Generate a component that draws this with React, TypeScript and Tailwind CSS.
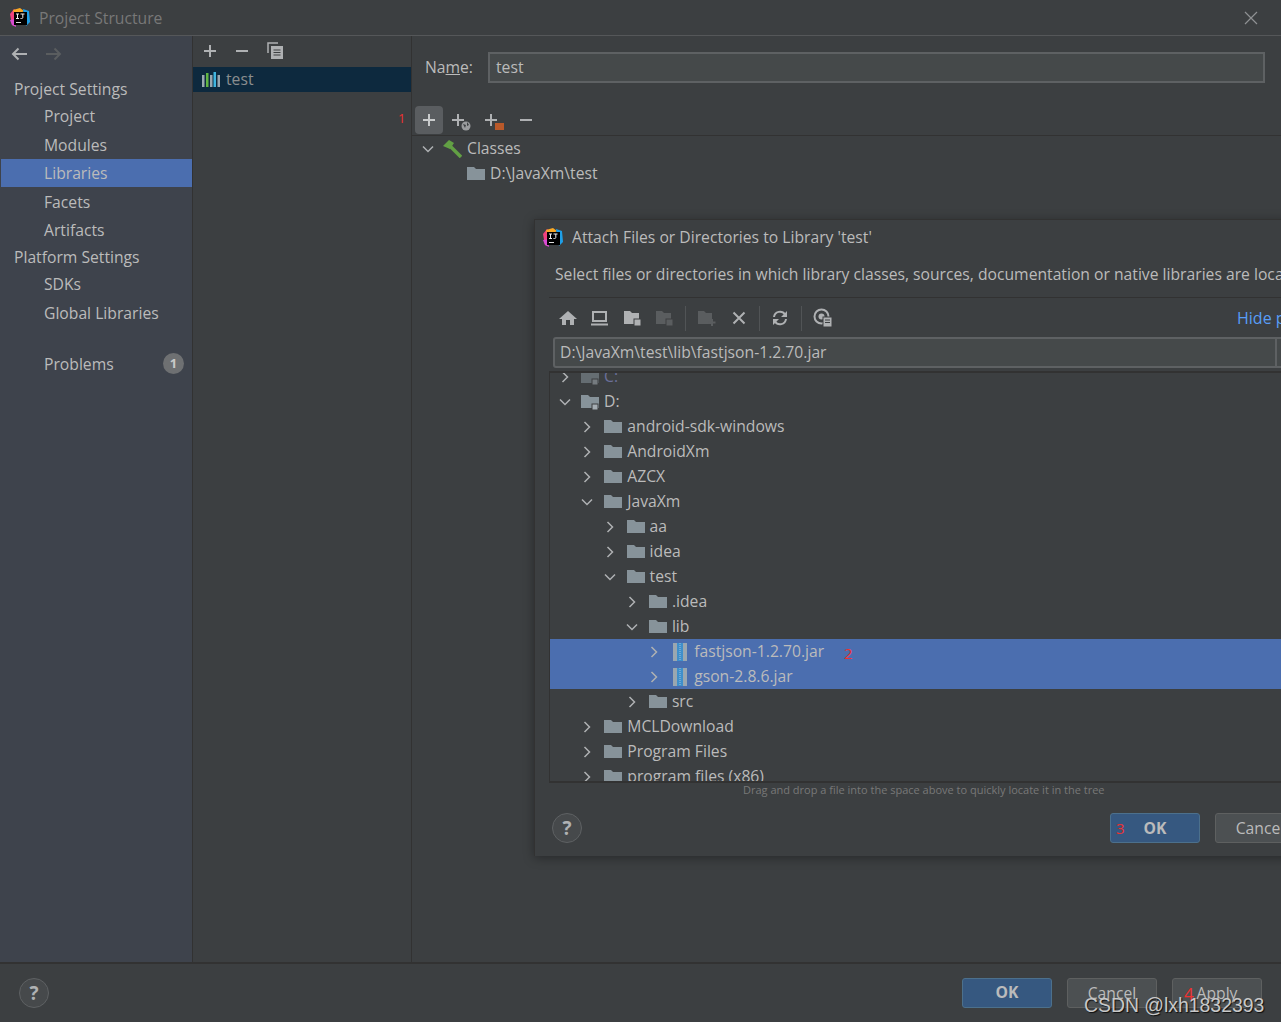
// Tree rows in the attach dialog
type Row = {
  name: string;
  depth: number;
  open?: boolean;
  kind?: "folder" | "drive" | "jar";
  selected?: boolean;
  dim?: boolean;
};

const rows: Row[] = [
  { name: "C:", depth: 0, kind: "drive", dim: true },
  { name: "D:", depth: 0, kind: "drive", open: true },
  { name: "android-sdk-windows", depth: 1 },
  { name: "AndroidXm", depth: 1 },
  { name: "AZCX", depth: 1 },
  { name: "JavaXm", depth: 1, open: true },
  { name: "aa", depth: 2 },
  { name: "idea", depth: 2 },
  { name: "test", depth: 2, open: true },
  { name: ".idea", depth: 3 },
  { name: "lib", depth: 3, open: true },
  { name: "fastjson-1.2.70.jar", depth: 4, kind: "jar", selected: true },
  { name: "gson-2.8.6.jar", depth: 4, kind: "jar", selected: true },
  { name: "src", depth: 3 },
  { name: "MCLDownload", depth: 1 },
  { name: "Program Files", depth: 1 },
  { name: "program files (x86)", depth: 1 },
];

const navItems = [
  { label: "Project Settings", head: true },
  { label: "Project" },
  { label: "Modules" },
  { label: "Libraries", active: true },
  { label: "Facets" },
  { label: "Artifacts" },
  { label: "Platform Settings", head: true },
  { label: "SDKs" },
  { label: "Global Libraries" },
];

const IdeaLogo = () => (
  <svg width="20" height="19" viewBox="0 0 20 19" className="shrink-0">
    <path d="M0 6 L4 1 L8 4 L5 13 L5 18 L2 17 Z" fill="#f0417e" />
    <path d="M3 2 L10 0 L14 3 L9 6 L4 6 Z" fill="#f9a825" />
    <path d="M13 1 L19 3 L20 14 L16 18 L14 8 Z" fill="#1e9fe8" />
    <path d="M0 12 L5 11 L6 19 L2 17 Z" fill="#d84bd0" />
    <rect x="4" y="4" width="13" height="13" fill="#000" />
    <rect x="6" y="14" width="5" height="1" fill="#ddd" />
    <path d="M6 6h3M7.500 6v4.500M6 10.500h3M10.500 6h4M12.800 6v3.500q0 1-1.300 1h-1" stroke="#eee" strokeWidth="1" fill="none" />
  </svg>
);

const Chevron = ({ open, color = "#afb1b3" }: { open?: boolean; color?: string }) => (
  <svg width="12" height="12" viewBox="0 0 12 12" className="shrink-0">
    <path
      d={open ? "M1 3.500 L6 8.500 L11 3.500" : "M3.500 1 L8.500 6 L3.500 11"}
      fill="none"
      stroke={color}
      strokeWidth="1.500"
    />
  </svg>
);

const FolderIcon = ({ lock, dim }: { lock?: boolean; dim?: boolean }) => (
  <svg width="18" height="16" viewBox="0 0 18 16" className="shrink-0" opacity={dim ? 0.55 : 1}>
    <path d="M0 1 H7 L9 3 H18 V14 H0 Z" fill="#87939a" />
    {lock && <rect x="11" y="10" width="6" height="6" fill="#a5adb3" stroke="#3c3f41" />}
  </svg>
);

const JarIcon = () => (
  <svg width="14" height="18" viewBox="0 0 14 18" className="shrink-0">
    <rect x="0" y="0" width="14" height="18" fill="#9aa7b0" />
    <rect x="4" y="0" width="6" height="18" fill="#3f8fcb" />
    <path d="M7 0 V18" stroke="#7fb4dc" strokeWidth="1.500" strokeDasharray="1 1" />
  </svg>
);

const LibIcon = () => (
  <svg width="18" height="15" viewBox="0 0 18 15" className="shrink-0">
    <rect x="0" y="3" width="2.500" height="12" fill="#9aa7b0" />
    <rect x="4" y="1" width="2.500" height="14" fill="#62b543" />
    <rect x="8" y="3" width="2.500" height="12" fill="#9aa7b0" />
    <rect x="11.500" y="0" width="2.500" height="15" fill="#40b6e0" />
    <rect x="15.500" y="3" width="2.500" height="12" fill="#9aa7b0" />
  </svg>
);

const Plus = ({ color = "#afb1b3" }: { color?: string }) => (
  <svg width="14" height="14" viewBox="0 0 14 14" className="shrink-0">
    <path d="M7 1 V13 M1 7 H13" stroke={color} strokeWidth="2" />
  </svg>
);

const Minus = () => (
  <svg width="14" height="14" viewBox="0 0 14 14" className="shrink-0">
    <path d="M1 7 H13" stroke="#afb1b3" strokeWidth="2" />
  </svg>
);

const CopyIcon = () => (
  <svg width="16" height="17" viewBox="0 0 16 17" className="shrink-0">
    <path d="M1 11 V1 H11" fill="none" stroke="#afb1b3" strokeWidth="1.500" />
    <rect x="4" y="4" width="12" height="13" fill="#afb1b3" />
    <path d="M6.500 8 H13.500 M6.500 10.500 H13.500 M6.500 13 H13.500" stroke="#3c3f41" strokeWidth="1.200" />
  </svg>
);

const Question = () => (
  <div className="flex h-[30px] w-[30px] items-center justify-center rounded-full border border-[#5e6163] bg-[#46494b] text-[19px] font-bold text-[#afb1b3]">
    ?
  </div>
);

const Sep = () => <div className="h-[25px] w-px bg-[#515456]" />;

const DialogToolbar = () => (
  <div className="flex h-[40px] items-center border-t border-[#323232] pl-[10px] pt-px">
    <svg width="18" height="16" viewBox="0 0 18 16" className="shrink-0"><path d="M9 1 L18 9 H15 V15 H11 V10 H7 V15 H3 V9 H0 Z" fill="#afb1b3" /></svg>
    <svg width="17" height="15" viewBox="0 0 17 15" className="ml-[14px] shrink-0"><path d="M2 1 H15 V10 H2 Z" fill="none" stroke="#afb1b3" strokeWidth="2" /><path d="M0 13.500 H17" stroke="#afb1b3" strokeWidth="2" /></svg>
    <svg width="17" height="16" viewBox="0 0 17 16" className="ml-[16px] shrink-0"><path d="M0 1 H6 L8 3 H15 V14 H0 Z" fill="#afb1b3" /><rect x="10" y="9" width="7" height="7" fill="#afb1b3" stroke="#3c3f41" /></svg>
    <svg width="17" height="16" viewBox="0 0 17 16" className="ml-[15px] shrink-0"><path d="M0 1 H6 L8 3 H15 V14 H0 Z" fill="#5a5d5f" /><rect x="10" y="9" width="7" height="7" fill="#5a5d5f" stroke="#3c3f41" /></svg>
    <div className="ml-[12px]"><Sep /></div>
    <svg width="18" height="16" viewBox="0 0 18 16" className="ml-[12px] shrink-0"><path d="M0 1 H6 L8 3 H14 V14 H0 Z" fill="#5a5d5f" /><path d="M14 9 V16 M10.500 12.500 H17.500" stroke="#5a5d5f" strokeWidth="2" /></svg>
    <svg width="14" height="14" viewBox="0 0 14 14" className="ml-[16px] shrink-0"><path d="M1.500 1.500 L12.500 12.500 M12.500 1.500 L1.500 12.500" stroke="#afb1b3" strokeWidth="2" /></svg>
    <div className="ml-[13px]"><Sep /></div>
    <svg width="16" height="16" viewBox="0 0 16 16" className="ml-[12px] shrink-0">
      <path d="M2 7 A6 6 0 0 1 13 4.500 M14 9 A6 6 0 0 1 3 11.500" fill="none" stroke="#afb1b3" strokeWidth="2" />
      <path d="M15 1 V7 H9 Z M1 15 V9 H7 Z" fill="#afb1b3" />
    </svg>
    <div className="ml-[13px]"><Sep /></div>
    <svg width="20" height="20" viewBox="0 0 20 20" className="ml-[11px] shrink-0">
      <circle cx="8.500" cy="8.500" r="7" fill="none" stroke="#afb1b3" strokeWidth="2" />
      <circle cx="8.500" cy="8.500" r="3" fill="#afb1b3" />
      <rect x="10" y="9" width="9" height="10" fill="#afb1b3" stroke="#3c3f41" />
      <path d="M12 12 H17 M12 14.500 H17" stroke="#3c3f41" />
    </svg>
    <span className="ml-[404px] whitespace-nowrap text-[16px] text-[#589df6]">Hide path</span>
  </div>
);

const TreeRow = ({ row }: { row: Row }) => (
  <div
    className={`flex h-[25px] items-center whitespace-nowrap ${row.selected ? "bg-[#4b6eaf]" : ""}`}
    style={{ paddingLeft: 9 + row.depth * 22.3 }}
  >
    <Chevron open={row.open} />
    {row.kind === "jar" ? (
      <div className="ml-[13px] mr-[7px]"><JarIcon /></div>
    ) : (
      <div className={`mr-[5px] w-[18px] ${row.kind === "drive" ? "ml-[10px]" : "ml-[11px]"}`}>
        <FolderIcon lock={row.kind === "drive"} dim={row.dim} />
      </div>
    )}
    <span className={row.dim ? "text-[#6b6f9a]" : "text-[#bbbbbb]"}>{row.name}</span>
  </div>
);

const AttachDialog = () => (
  <div className="absolute left-[534px] top-[219px] flex h-[637px] w-[800px] flex-col border-l border-t border-[#323232] bg-[#3c3f41] shadow-[0_2px_10px_rgba(0,0,0,0.35)]">
    <div className="flex h-[35px] items-center gap-[9px] pl-[8px]">
      <IdeaLogo />
      <span className="text-[#bbbbbb]">Attach Files or Directories to Library 'test'</span>
    </div>
    <p className="mt-[7px] whitespace-nowrap pl-[20px] leading-[24px] text-[#bbbbbb]">
      Select files or directories in which library classes, sources, documentation or native libraries are located
    </p>
    <div className="ml-[14px] mt-[11px] flex flex-col">
      <DialogToolbar />
      <div className="ml-[4px] flex h-[31px] items-center rounded-[3px] border-2 border-[#5e6163] bg-[#45494a] text-[#bbbbbb]">
        <div className="flex h-full w-[722px] shrink-0 items-center border-r-2 border-[#5e6163] pl-[5px]">
          D:\JavaXm\test\lib\fastjson-1.2.70.jar
        </div>
      </div>
      <div className="mt-[3px] h-[412px] overflow-hidden border-l border-t-2 border-b-2 border-[#323232]">
        <div className="-mt-[9px] pb-[9px]">
          {rows.map((r) => <TreeRow key={r.name} row={r} />)}
        </div>
      </div>
    </div>
    <p className="ml-[208px] whitespace-nowrap text-[11px] leading-[14px] text-[#787878]">
      Drag and drop a file into the space above to quickly locate it in the tree
    </p>
    <div className="mt-[16px] flex items-center pl-[17px]">
      <Question />
      <button className="relative ml-[528px] h-[30px] w-[90px] rounded-[3px] border border-[#4c708c] bg-[#365880] pt-px font-bold text-[#bbbbbb]">OK</button>
      <button className="ml-[15px] h-[30px] w-[90px] rounded-[3px] border border-[#5e6060] bg-[#4c5052] pt-px text-[#bbbbbb]">Cancel</button>
    </div>
  </div>
);

export default function App() {
  return (
    <div className="relative flex h-[1022px] w-[1281px] flex-col overflow-hidden bg-[#3c3f41] font-['Open_Sans','Noto_Sans',sans-serif] text-[15.700px] text-[#bbbbbb]">
      {/* Title bar */}
      <div className="flex h-[36px] shrink-0 items-center gap-[9px] border-b border-[#555759] pl-[10px]">
        <IdeaLogo />
        <span className="pt-[2px] text-[#787878]">Project Structure</span>
        <svg width="14" height="14" viewBox="0 0 14 14" className="ml-auto mr-[23px]">
          <path d="M1 1 L13 13 M13 1 L1 13" stroke="#8f9193" strokeWidth="1.200" />
        </svg>
      </div>

      <div className="flex min-h-0 flex-1">
        {/* Sidebar */}
        <div className="flex w-[192px] shrink-0 flex-col bg-[#3e434c] pl-px">
          <div className="flex h-[35px] items-center gap-[17px] pl-[10px]">
            <svg width="17" height="14" viewBox="0 0 17 14"><path d="M16 7 H2 M7.500 1.500 L2 7 L7.500 12.500" fill="none" stroke="#afb1b3" strokeWidth="2" /></svg>
            <svg width="17" height="14" viewBox="0 0 17 14"><path d="M1 7 H15 M9.500 1.500 L15 7 L9.500 12.500" fill="none" stroke="#5a5d5f" strokeWidth="2" /></svg>
          </div>
          <div className="mt-[5.500px]">
            {navItems.map((n) => (
              <div
                key={n.label}
                className={`flex items-center pt-[2px] ${n.head ? "h-[25px] pl-[13px]" : "h-[28.600px] pl-[43px]"} ${n.active ? "bg-[#4b6eaf]" : ""}`}
              >
                {n.label}
              </div>
            ))}
          </div>
          <div className="mt-[23px] flex h-[28px] items-center pl-[43px] pr-[8px]">
            <span className="pt-[2px]">Problems</span>
            <span className="ml-auto flex h-[21px] w-[21px] items-center justify-center rounded-full bg-[#6e7072] text-[13px] font-bold text-[#c8c8c8]">1</span>
          </div>
        </div>

        {/* Library list */}
        <div className="flex w-[220px] shrink-0 flex-col border-x border-[#323232]">
          <div className="flex h-[31px] items-center gap-[18px] pl-[10px] pb-[2px]">
            <Plus />
            <Minus />
            <CopyIcon />
          </div>
          <div className="flex h-[25px] items-center gap-[6px] bg-[#0d293e] pl-[9px] text-[#8a8d8f]">
            <LibIcon />
            test
          </div>
        </div>

        {/* Library details */}
        <div className="min-w-0 flex-1">
          <div className="flex h-[62px] items-center pl-[13px] pr-[16px]">
            <span className="w-[63px] pt-[2px]">Na<span className="underline">m</span>e:</span>
            <div className="flex h-[31px] flex-1 items-center border-2 border-[#5e6163] bg-[#45494a] pl-[6px] pt-[2px]">test</div>
          </div>
          <div className="flex h-[38px] items-center border-b border-[#323232] pl-[3px] pt-[6px]">
            <div className="flex h-[28px] w-[28px] items-center justify-center rounded-[4px] bg-[#5a5d60]"><Plus color="#c9cbcc" /></div>
            <div className="relative ml-[8px]">
              <Plus />
              <svg width="10" height="10" viewBox="0 0 10 10" className="absolute -bottom-[4px] -right-[6px]">
                <circle cx="5" cy="5" r="4.500" fill="#9a9c9e" />
                <path d="M2 3 L5 4 L4 7 Z M6 1 L8 4 L6 5 Z" fill="#3c3f41" />
              </svg>
            </div>
            <div className="relative ml-[19px]">
              <Plus />
              <div className="absolute -bottom-[3px] -right-[6px] h-[7px] w-[9px] bg-[#b9592a]" />
            </div>
            <div className="ml-[21px]"><Minus /></div>
          </div>
          <div className="flex h-[25px] items-center pl-[10px]">
            <Chevron open />
            <svg width="19" height="18" viewBox="0 0 19 18" className="ml-[9px] mr-[5px]">
              <path d="M0 6 L6 0 L11 3 L7 9 Z" fill="#62a044" />
              <path d="M7 6 L18 17" stroke="#62a044" strokeWidth="3.500" />
            </svg>
            Classes
          </div>
          <div className="flex h-[25px] items-center pl-[55px]">
            <FolderIcon />
            <span className="ml-[5px]">D:\JavaXm\test</span>
          </div>
        </div>
      </div>

      {/* Bottom bar */}
      <div className="flex h-[60px] shrink-0 items-center border-t-2 border-[#323232] pl-[19px] pr-[19px]">
        <Question />
        <button className="ml-auto h-[30px] w-[90px] rounded-[3px] border border-[#4c708c] bg-[#365880] font-bold">OK</button>
        <button className="ml-[15px] h-[30px] w-[90px] rounded-[3px] border border-[#5e6060] bg-[#4c5052] pt-px">Cancel</button>
        <button className="ml-[15px] h-[30px] w-[90px] rounded-[3px] border border-[#5e6060] bg-[#4c5052] pt-px">Apply</button>
      </div>

      <AttachDialog />

      {/* Red step numbers added on the screenshot */}
      <span className="absolute left-[398px] top-[109px] text-[13px] text-[#f03030]">1</span>
      <span className="absolute left-[844px] top-[642px] text-[15px] text-[#f03030]">2</span>
      <span className="absolute left-[1116px] top-[817px] text-[15px] text-[#f03030]">3</span>
      <span className="absolute left-[1184px] top-[981px] text-[17px] text-[#f03030]">4</span>

      {/* Watermark */}
      <span className="absolute left-[1084px] top-[991px] font-['Liberation_Sans',sans-serif] text-[19.400px] text-[#c8c8c8] [text-shadow:1px_1px_1px_rgba(0,0,0,0.8)]">
        CSDN @lxh1832393
      </span>
    </div>
  );
}
